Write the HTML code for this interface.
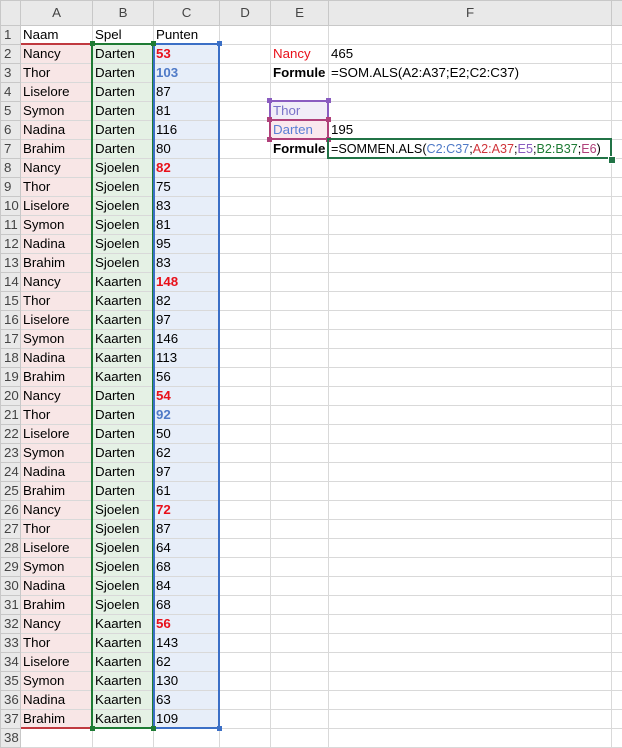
<!DOCTYPE html>
<html><head><meta charset="utf-8"><style>
body{margin:0;width:622px;height:746px;overflow:hidden;background:#fff;font-family:"Liberation Sans",Calibri,sans-serif;font-size:13.3px;color:#000;position:relative}
table{border-collapse:collapse;table-layout:fixed;position:absolute;left:0;top:0;width:622px}
td{border:1px solid #d9d9d9;height:18px;padding:0 0 0 2px;white-space:nowrap;overflow:visible;line-height:18px}
tr.h td{height:24px;background:#e9e9e9;text-align:center;color:#444;border-color:#c8c8c8;padding:0}
td.r{background:#e9e9e9;text-align:left;padding:0;text-indent:3px;color:#444;border-color:#c8c8c8;overflow:hidden}
td.a{background:#f8e6e6}td.b{background:#e5f1e5}td.c{background:#e7eef9}
.rb{color:#e8101a;font-weight:bold}.bb{color:#4f7ac7;font-weight:bold}
.ov{position:absolute;box-sizing:border-box}
.hd{position:absolute;width:5px;height:5px}
</style></head><body>
<table>
<colgroup><col style="width:20px"><col style="width:72px"><col style="width:61px"><col style="width:66px"><col style="width:51px"><col style="width:58px"><col style="width:283px"><col style="width:11px"></colgroup>
<tr class="h"><td></td><td>A</td><td>B</td><td>C</td><td>D</td><td>E</td><td>F</td><td></td></tr>
<tr><td class="r">1</td><td>Naam</td><td>Spel</td><td>Punten</td><td></td><td></td><td></td><td></td></tr>
<tr><td class="r">2</td><td class="a">Nancy</td><td class="b">Darten</td><td class="c rb">53</td><td></td><td style="color:#e8101a">Nancy</td><td>465</td><td></td></tr>
<tr><td class="r">3</td><td class="a">Thor</td><td class="b">Darten</td><td class="c bb">103</td><td></td><td><b>Formule</b></td><td>=SOM.ALS(A2:A37;E2;C2:C37)</td><td></td></tr>
<tr><td class="r">4</td><td class="a">Liselore</td><td class="b">Darten</td><td class="c">87</td><td></td><td></td><td></td><td></td></tr>
<tr><td class="r">5</td><td class="a">Symon</td><td class="b">Darten</td><td class="c">81</td><td></td><td style="background:#f1edf8;color:#7a72c8">Thor</td><td></td><td></td></tr>
<tr><td class="r">6</td><td class="a">Nadina</td><td class="b">Darten</td><td class="c">116</td><td></td><td style="background:#fae8ee;color:#5b7fd6">Darten</td><td>195</td><td></td></tr>
<tr><td class="r">7</td><td class="a">Brahim</td><td class="b">Darten</td><td class="c">80</td><td></td><td><b>Formule</b></td><td style="font-size:12.6px">=SOMMEN.ALS(<span style="color:#4f7ac7">C2:C37</span>;<span style="color:#d0343a">A2:A37</span>;<span style="color:#8a5cc0">E5</span>;<span style="color:#1e7b34">B2:B37</span>;<span style="color:#b0407a">E6</span>)</td><td></td></tr>
<tr><td class="r">8</td><td class="a">Nancy</td><td class="b">Sjoelen</td><td class="c rb">82</td><td></td><td></td><td></td><td></td></tr>
<tr><td class="r">9</td><td class="a">Thor</td><td class="b">Sjoelen</td><td class="c">75</td><td></td><td></td><td></td><td></td></tr>
<tr><td class="r">10</td><td class="a">Liselore</td><td class="b">Sjoelen</td><td class="c">83</td><td></td><td></td><td></td><td></td></tr>
<tr><td class="r">11</td><td class="a">Symon</td><td class="b">Sjoelen</td><td class="c">81</td><td></td><td></td><td></td><td></td></tr>
<tr><td class="r">12</td><td class="a">Nadina</td><td class="b">Sjoelen</td><td class="c">95</td><td></td><td></td><td></td><td></td></tr>
<tr><td class="r">13</td><td class="a">Brahim</td><td class="b">Sjoelen</td><td class="c">83</td><td></td><td></td><td></td><td></td></tr>
<tr><td class="r">14</td><td class="a">Nancy</td><td class="b">Kaarten</td><td class="c rb">148</td><td></td><td></td><td></td><td></td></tr>
<tr><td class="r">15</td><td class="a">Thor</td><td class="b">Kaarten</td><td class="c">82</td><td></td><td></td><td></td><td></td></tr>
<tr><td class="r">16</td><td class="a">Liselore</td><td class="b">Kaarten</td><td class="c">97</td><td></td><td></td><td></td><td></td></tr>
<tr><td class="r">17</td><td class="a">Symon</td><td class="b">Kaarten</td><td class="c">146</td><td></td><td></td><td></td><td></td></tr>
<tr><td class="r">18</td><td class="a">Nadina</td><td class="b">Kaarten</td><td class="c">113</td><td></td><td></td><td></td><td></td></tr>
<tr><td class="r">19</td><td class="a">Brahim</td><td class="b">Kaarten</td><td class="c">56</td><td></td><td></td><td></td><td></td></tr>
<tr><td class="r">20</td><td class="a">Nancy</td><td class="b">Darten</td><td class="c rb">54</td><td></td><td></td><td></td><td></td></tr>
<tr><td class="r">21</td><td class="a">Thor</td><td class="b">Darten</td><td class="c bb">92</td><td></td><td></td><td></td><td></td></tr>
<tr><td class="r">22</td><td class="a">Liselore</td><td class="b">Darten</td><td class="c">50</td><td></td><td></td><td></td><td></td></tr>
<tr><td class="r">23</td><td class="a">Symon</td><td class="b">Darten</td><td class="c">62</td><td></td><td></td><td></td><td></td></tr>
<tr><td class="r">24</td><td class="a">Nadina</td><td class="b">Darten</td><td class="c">97</td><td></td><td></td><td></td><td></td></tr>
<tr><td class="r">25</td><td class="a">Brahim</td><td class="b">Darten</td><td class="c">61</td><td></td><td></td><td></td><td></td></tr>
<tr><td class="r">26</td><td class="a">Nancy</td><td class="b">Sjoelen</td><td class="c rb">72</td><td></td><td></td><td></td><td></td></tr>
<tr><td class="r">27</td><td class="a">Thor</td><td class="b">Sjoelen</td><td class="c">87</td><td></td><td></td><td></td><td></td></tr>
<tr><td class="r">28</td><td class="a">Liselore</td><td class="b">Sjoelen</td><td class="c">64</td><td></td><td></td><td></td><td></td></tr>
<tr><td class="r">29</td><td class="a">Symon</td><td class="b">Sjoelen</td><td class="c">68</td><td></td><td></td><td></td><td></td></tr>
<tr><td class="r">30</td><td class="a">Nadina</td><td class="b">Sjoelen</td><td class="c">84</td><td></td><td></td><td></td><td></td></tr>
<tr><td class="r">31</td><td class="a">Brahim</td><td class="b">Sjoelen</td><td class="c">68</td><td></td><td></td><td></td><td></td></tr>
<tr><td class="r">32</td><td class="a">Nancy</td><td class="b">Kaarten</td><td class="c rb">56</td><td></td><td></td><td></td><td></td></tr>
<tr><td class="r">33</td><td class="a">Thor</td><td class="b">Kaarten</td><td class="c">143</td><td></td><td></td><td></td><td></td></tr>
<tr><td class="r">34</td><td class="a">Liselore</td><td class="b">Kaarten</td><td class="c">62</td><td></td><td></td><td></td><td></td></tr>
<tr><td class="r">35</td><td class="a">Symon</td><td class="b">Kaarten</td><td class="c">130</td><td></td><td></td><td></td><td></td></tr>
<tr><td class="r">36</td><td class="a">Nadina</td><td class="b">Kaarten</td><td class="c">63</td><td></td><td></td><td></td><td></td></tr>
<tr><td class="r">37</td><td class="a">Brahim</td><td class="b">Kaarten</td><td class="c">109</td><td></td><td></td><td></td><td></td></tr>
<tr><td class="r">38</td><td></td><td></td><td></td><td></td><td></td><td></td><td></td></tr>
</table>
<div class="ov" style="left:21px;top:43px;width:71px;height:2px;background:#c0393f"></div>
<div class="ov" style="left:21px;top:727px;width:71px;height:2px;background:#c0393f"></div>
<div class="ov" style="left:91px;top:43px;width:63px;height:686px;border:2px solid #1e7b34"></div>
<div class="ov" style="left:153px;top:43px;width:67px;height:686px;border:2px solid #3b6fc6"></div>
<div class="hd" style="left:90px;top:41px;background:#1e7b34"></div>
<div class="hd" style="left:151px;top:41px;background:#1e7b34"></div>
<div class="hd" style="left:90px;top:726px;background:#1e7b34"></div>
<div class="hd" style="left:151px;top:726px;background:#1e7b34"></div>
<div class="hd" style="left:217px;top:41px;background:#3b6fc6"></div>
<div class="hd" style="left:217px;top:726px;background:#3b6fc6"></div>
<div class="ov" style="left:269px;top:100px;width:60px;height:21px;border:2px solid #8a5cc0"></div>
<div class="ov" style="left:269px;top:119px;width:60px;height:21px;border:2px solid #b0407a"></div>
<div class="hd" style="left:267px;top:98px;background:#8a5cc0"></div>
<div class="hd" style="left:326px;top:98px;background:#8a5cc0"></div>
<div class="hd" style="left:267px;top:117px;background:#b0407a"></div>
<div class="hd" style="left:326px;top:117px;background:#b0407a"></div>
<div class="hd" style="left:267px;top:137px;background:#b0407a"></div>
<div class="hd" style="left:326px;top:137px;background:#b0407a"></div>
<div class="ov" style="left:327px;top:138px;width:285px;height:21px;border:2px solid #217346"></div>
<div class="hd" style="left:608px;top:156px;width:6px;height:6px;background:#217346;border:1px solid #fff"></div>
</body></html>
